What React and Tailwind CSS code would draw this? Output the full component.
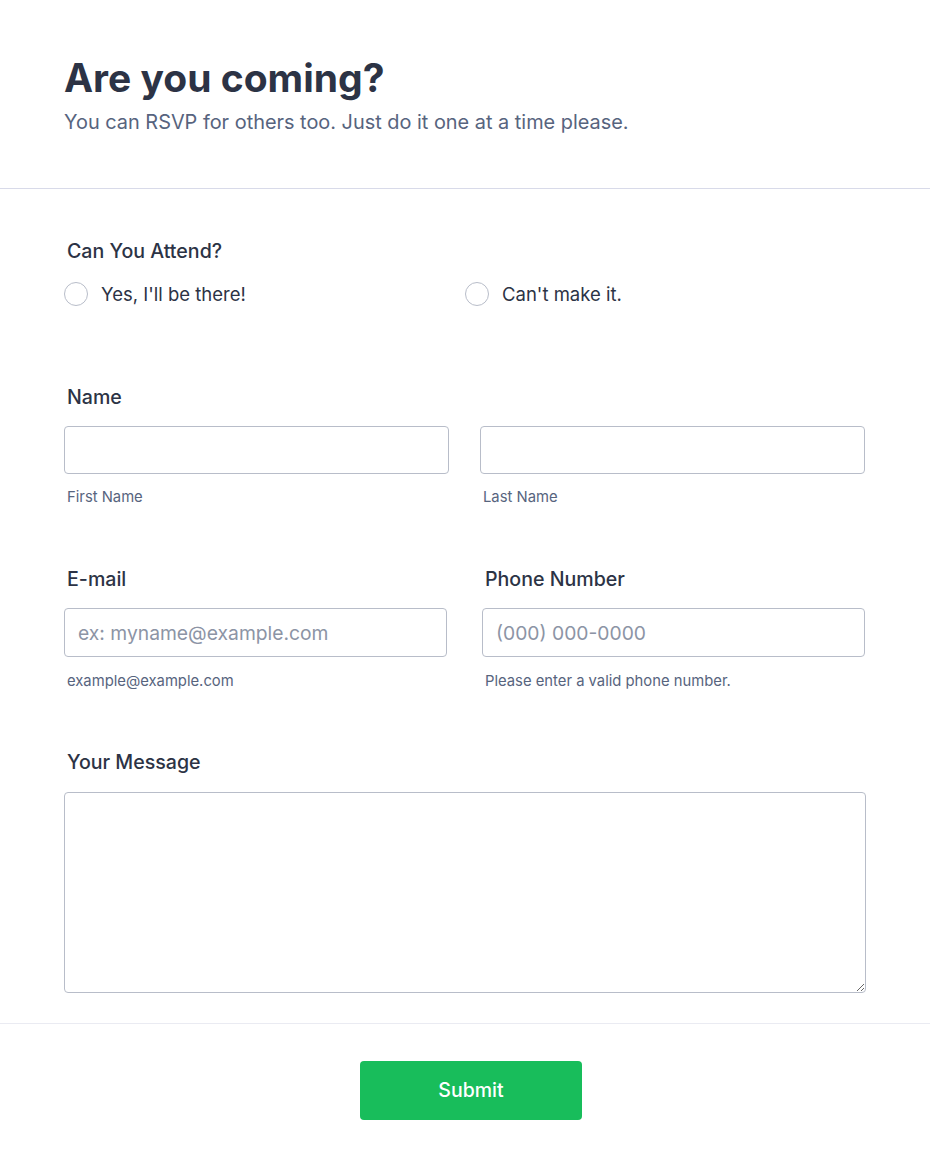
import React from 'react';

function Radio({ label }) {
  return (
    <label className="flex items-center gap-[13px] cursor-pointer">
      <span className="w-6 h-6 rounded-full border border-[#b8bdc9] bg-white shrink-0" />
      <span className="text-[18.5px] leading-[28px] text-[#2c3345]">{label}</span>
    </label>
  );
}

function FieldLabel({ children }) {
  return <div className="pl-[3px] text-[19.6px] leading-[28px] font-medium text-[#2c3345]">{children}</div>;
}

function SubLabel({ children }) {
  return <div className="pl-[3px] text-[14.8px] leading-[20px] text-[#57647e]">{children}</div>;
}

const inputCls =
  'w-full h-12 rounded-[4px] border border-[#b8bdc9] bg-white px-[13px] text-[19.3px] text-[#2c3345] placeholder:text-[#8c94a5] outline-none';

export default function App() {
  return (
    <div className="bg-white min-h-[1170px] font-['Inter',sans-serif]">
      <div className="px-16 pt-[54px] pb-[52px] border-b border-[#d8dae9]">
        <h1 className="text-[39px] leading-[48px] font-bold text-[#2c3345]">Are you coming?</h1>
        <p className="mt-[6px] text-[19.9px] leading-[28px] text-[#57647e]">
          You can RSVP for others too. Just do it one at a time please.
        </p>
      </div>

      <div className="px-16 pt-12 pb-[30px] border-b border-[#eaebf2]">
        <FieldLabel>Can You Attend?</FieldLabel>
        <div className="mt-[15px] grid grid-cols-2">
          <Radio label="Yes, I'll be there!" />
          <Radio label="Can't make it." />
        </div>

        <div className="mt-[75px]">
          <FieldLabel>Name</FieldLabel>
          <div className="mt-[15px] grid grid-cols-[385px_385px] gap-x-[31px]">
            <div>
              <input className={inputCls} />
              <div className="mt-[13px]"><SubLabel>First Name</SubLabel></div>
            </div>
            <div>
              <input className={inputCls} />
              <div className="mt-[13px]"><SubLabel>Last Name</SubLabel></div>
            </div>
          </div>
        </div>

        <div className="mt-[58px] grid grid-cols-[383px_383px] gap-x-[35px]">
          <div>
            <FieldLabel>E-mail</FieldLabel>
            <input className={inputCls + ' mt-[15px] h-[49px]'} placeholder="ex: myname@example.com" />
            <div className="mt-[14px]"><SubLabel>example@example.com</SubLabel></div>
          </div>
          <div>
            <FieldLabel>Phone Number</FieldLabel>
            <input className={inputCls + ' mt-[15px] h-[49px]'} placeholder="(000) 000-0000" />
            <div className="mt-[14px]"><SubLabel>Please enter a valid phone number.</SubLabel></div>
          </div>
        </div>

        <div className="mt-[57px]">
          <FieldLabel>Your Message</FieldLabel>
          <textarea className="mt-4 block w-full h-[201px] rounded-[4px] border border-[#b8bdc9] bg-white px-[13px] py-2 text-[18px] text-[#2c3345] outline-none resize-y" />
        </div>
      </div>

      <div className="flex justify-center pt-[37px] pl-3">
        <button className="w-[222px] h-[59px] rounded-[4px] bg-[#18bd5b] text-white text-[19.5px] font-medium">
          Submit
        </button>
      </div>
    </div>
  );
}
